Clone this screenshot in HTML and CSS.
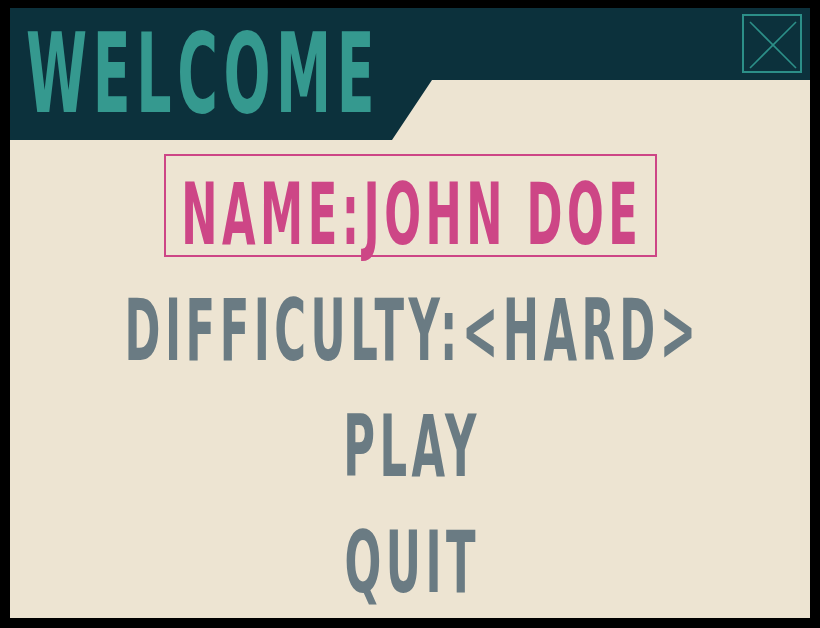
FILE: index.html
```html
<!DOCTYPE html>
<html lang="en">
<head>
<meta charset="utf-8">
<title>Welcome</title>
<link rel="stylesheet" href="styles.css">
</head>
<body>
<div class="panel">
  <header class="header">
    <h1 class="title"><span class="squeeze squeeze-left">WELCOME</span></h1>
    <button class="close" aria-label="Close">
      <svg width="60" height="60" viewBox="0 0 60 60">
        <rect x="1" y="1" width="58" height="57" fill="none" stroke="#2c8f88" stroke-width="2"/>
        <line x1="8" y1="8" x2="54" y2="54" stroke="#2c8f88" stroke-width="1.6"/>
        <line x1="54" y1="8" x2="8" y2="54" stroke="#2c8f88" stroke-width="1.6"/>
      </svg>
    </button>
  </header>
  <nav class="menu">
    <div class="item item-selected"><span class="squeeze">NAME:JOHN DOE</span></div>
    <div class="item"><span class="squeeze">DIFFICULTY:&lt;HARD&gt;</span></div>
    <div class="item"><span class="squeeze">PLAY</span></div>
    <div class="item"><span class="squeeze">QUIT</span></div>
  </nav>
</div>
</body>
</html>
```
FILE: styles.css
```css
html, body {
  margin: 0;
  padding: 0;
  background: #000;
}
body {
  width: 820px;
  height: 628px;
  overflow: hidden;
  font-family: "DejaVu Sans Condensed", "DejaVu Sans", sans-serif;
  font-weight: bold;
}
.panel {
  margin: 8px 10px 0 10px;
  width: 800px;
  height: 610px;
  background: #ede4d2;
  display: flex;
  flex-direction: column;
  overflow: hidden;
}
.header {
  height: 132px;
  flex: none;
  background: #0c313c;
  display: flex;
  justify-content: space-between;
  align-items: flex-start;
  clip-path: polygon(0 0, 100% 0, 100% 72px, 422px 72px, 382px 132px, 0 132px);
}
.title {
  margin: 0;
  padding: 1px 0 0 16px;
  font-size: 110px;
  line-height: 131px;
  letter-spacing: 10px;
  color: #35998f;
  font-weight: bold;
  white-space: nowrap;
}
.squeeze {
  display: inline-block;
  transform: scaleX(0.56);
  transform-origin: center center;
  white-space: nowrap;
  padding-left: 8px;
}
.squeeze-left {
  transform-origin: left center;
  padding-left: 0;
}
.close {
  margin: 6px 8px 0 0;
  padding: 0;
  border: 0;
  background: none;
  width: 60px;
  height: 60px;
  display: block;
  flex: none;
}
.close svg {
  display: block;
}
.menu {
  display: flex;
  flex-direction: column;
  align-items: center;
  gap: 36px;
  padding-top: 14px;
}
.item {
  display: flex;
  justify-content: center;
  font-size: 86px;
  line-height: 80px;
  height: 80px;
  letter-spacing: 8px;
  color: #6a7b83;
  white-space: nowrap;
}
.item-selected {
  box-sizing: content-box;
  width: 489px;
  height: 81px;
  line-height: 81px;
  padding-top: 18px;
  border: 2px solid #cd4686;
  color: #cd4686;
  margin-bottom: -3px;
}
```
